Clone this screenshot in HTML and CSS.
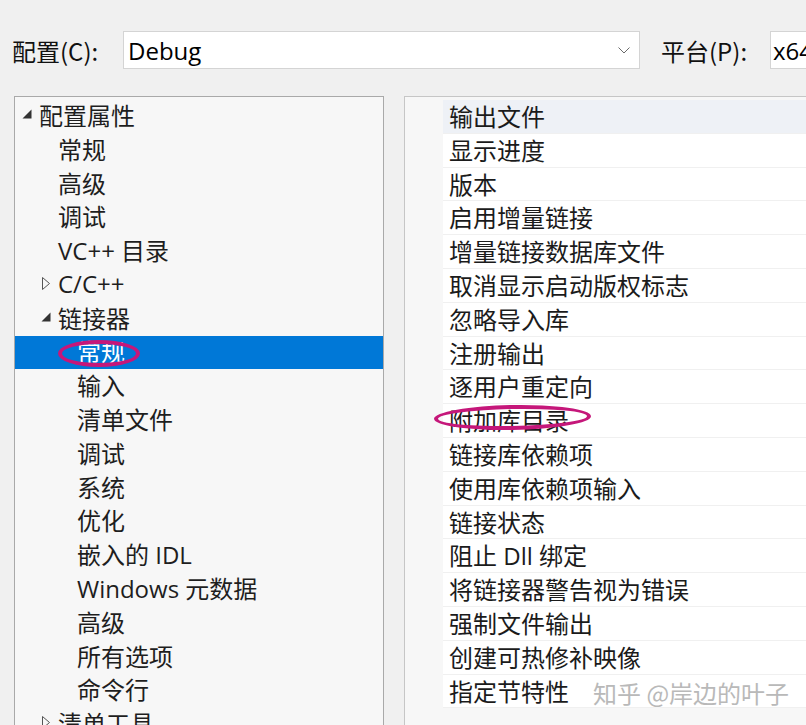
FILE: index.html
```html
<!DOCTYPE html>
<html lang="zh-CN">
<head>
<meta charset="utf-8">
<title>属性页</title>
<link rel="stylesheet" href="styles.css">
</head>
<body>
<div class="page">
  <div class="toolbar">
    <label class="label label-config">配置(C):</label>
    <div class="combo combo-config">
      <span class="combo-text">Debug</span>
      <svg class="chevron" width="12" height="7" viewBox="0 0 12 7"><polyline points="0.5,0.5 6,6 11.5,0.5" fill="none" stroke="#6a6a6a" stroke-width="1"/></svg>
    </div>
    <label class="label label-platform">平台(P):</label>
    <div class="combo combo-platform"><span class="combo-text">x64</span></div>
  </div>

  <div class="panes">
    <div class="tree">
      <div class="row lv0"><span class="arrow"><svg width="10" height="10" viewBox="0 0 10 10"><polygon points="9.5,0.5 9.5,9.5 0.5,9.5" fill="#333"/></svg></span><span>配置属性</span></div>
      <div class="row lv1"><span class="arrow"></span><span>常规</span></div>
      <div class="row lv1"><span class="arrow"></span><span>高级</span></div>
      <div class="row lv1"><span class="arrow"></span><span>调试</span></div>
      <div class="row lv1"><span class="arrow"></span><span>VC++ 目录</span></div>
      <div class="row lv1"><span class="arrow"><svg width="10" height="15" viewBox="0 0 10 15"><polygon points="1.5,1.5 8.5,7.5 1.5,13.5" fill="none" stroke="#555" stroke-width="1"/></svg></span><span>C/C++</span></div>
      <div class="row lv1"><span class="arrow"><svg width="10" height="10" viewBox="0 0 10 10"><polygon points="9.5,0.5 9.5,9.5 0.5,9.5" fill="#333"/></svg></span><span>链接器</span></div>
      <div class="row lv2 selected"><span class="arrow"></span><span>常规</span><span class="mark mark-tree"></span></div>
      <div class="row lv2"><span class="arrow"></span><span>输入</span></div>
      <div class="row lv2"><span class="arrow"></span><span>清单文件</span></div>
      <div class="row lv2"><span class="arrow"></span><span>调试</span></div>
      <div class="row lv2"><span class="arrow"></span><span>系统</span></div>
      <div class="row lv2"><span class="arrow"></span><span>优化</span></div>
      <div class="row lv2"><span class="arrow"></span><span>嵌入的 IDL</span></div>
      <div class="row lv2"><span class="arrow"></span><span>Windows 元数据</span></div>
      <div class="row lv2"><span class="arrow"></span><span>高级</span></div>
      <div class="row lv2"><span class="arrow"></span><span>所有选项</span></div>
      <div class="row lv2"><span class="arrow"></span><span>命令行</span></div>
      <div class="row lv1"><span class="arrow"><svg width="10" height="15" viewBox="0 0 10 15"><polygon points="1.5,1.5 8.5,7.5 1.5,13.5" fill="none" stroke="#555" stroke-width="1"/></svg></span><span>清单工具</span></div>
    </div>

    <div class="grid">
      <div class="prop first">输出文件</div>
      <div class="prop">显示进度</div>
      <div class="prop">版本</div>
      <div class="prop">启用增量链接</div>
      <div class="prop">增量链接数据库文件</div>
      <div class="prop">取消显示启动版权标志</div>
      <div class="prop">忽略导入库</div>
      <div class="prop">注册输出</div>
      <div class="prop">逐用户重定向</div>
      <div class="prop">附加库目录<span class="mark mark-grid"></span></div>
      <div class="prop">链接库依赖项</div>
      <div class="prop">使用库依赖项输入</div>
      <div class="prop">链接状态</div>
      <div class="prop">阻止 Dll 绑定</div>
      <div class="prop">将链接器警告视为错误</div>
      <div class="prop">强制文件输出</div>
      <div class="prop">创建可热修补映像</div>
      <div class="prop">指定节特性</div>
    </div>
  </div>

  <div class="watermark">知乎 @岸边的叶子</div>
</div>
</body>
</html>
```

FILE: styles.css
```css
html, body {
  margin: 0;
  padding: 0;
}

body {
  background: #f0f0f0;
  font-family: "Open Sans", "Noto Sans CJK SC", sans-serif;
  color: #1a1a1a;
}

.page {
  position: relative;
  width: 806px;
  height: 725px;
  overflow: hidden;
}

.toolbar {
  display: flex;
  align-items: center;
  height: 38px;
  padding-top: 31px;
  white-space: nowrap;
}

.label {
  font-size: 24px;
  font-family: "Noto Sans CJK SC", sans-serif;
  color: #111;
  box-sizing: border-box;
}

.label-config {
  width: 123px;
  padding-left: 12px;
  flex: none;
}

.label-platform {
  width: 130px;
  padding-left: 21px;
  flex: none;
}

.combo {
  box-sizing: border-box;
  height: 38px;
  background: #ffffff;
  border: 1px solid #d4d4d4;
  display: flex;
  align-items: center;
  flex: none;
}

.combo-config {
  width: 517px;
  padding-left: 4px;
  padding-right: 9px;
  justify-content: space-between;
}

.combo-platform {
  width: 120px;
  padding-left: 2px;
}

.combo-text {
  font-size: 24px;
  color: #000;
}

.chevron {
  display: block;
}

.panes {
  display: flex;
  margin-top: 27px;
  align-items: flex-start;
}

.tree {
  flex: none;
  box-sizing: border-box;
  width: 370px;
  height: 660px;
  margin-left: 14px;
  background: #f7f7f7;
  border: 1px solid #a9a9a9;
  padding-top: 2px;
}

.row {
  position: relative;
  box-sizing: border-box;
  display: flex;
  align-items: center;
  height: 33.8px;
  padding-bottom: 3px;
  font-size: 24px;
  white-space: nowrap;
  color: #1e1e1e;
}

.row .arrow {
  flex: none;
  width: 17px;
  display: flex;
  align-items: center;
}

.row .arrow svg {
  display: block;
}

.lv0 { padding-left: 7px; }
.lv1 { padding-left: 26px; }
.lv2 { padding-left: 45px; }

.row.selected {
  background: #0078d7;
  color: #ffffff;
}

.grid {
  flex: none;
  box-sizing: border-box;
  width: 420px;
  height: 660px;
  margin-left: 20px;
  background: #f7f7f7;
  border: 1px solid #c6c6c6;
  padding-top: 3px;
}

.prop {
  position: relative;
  box-sizing: border-box;
  height: 33.8px;
  margin-left: 38px;
  padding-left: 6px;
  background: #ffffff;
  border-bottom: 1px solid #f0f0f0;
  font-size: 24px;
  line-height: 33px;
  white-space: nowrap;
  color: #1b1b1b;
}

.prop.first {
  background: #eef1f6;
}

.mark {
  position: absolute;
  box-sizing: border-box;
  border: 4px solid #c5177a;
  border-radius: 50%;
  pointer-events: none;
}

.mark-tree {
  left: 43px;
  top: 4px;
  width: 82px;
  height: 27px;
}

.mark-grid {
  left: -9px;
  top: 1px;
  width: 157px;
  height: 25px;
  transform: rotate(-1deg);
}

.watermark {
  position: absolute;
  left: 593px;
  top: 675px;
  font-family: "Noto Sans CJK SC", sans-serif;
  font-size: 24px;
  color: #b9b9b9;
  text-shadow: 0 0 1px #ffffff, 0 0 2px #ffffff;
  white-space: nowrap;
}
```
